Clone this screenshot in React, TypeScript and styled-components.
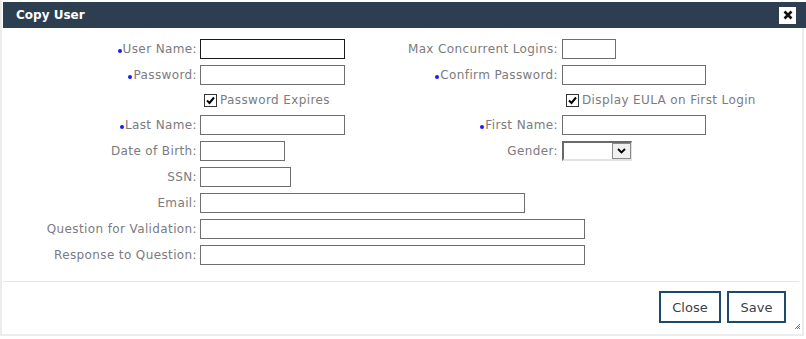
import React from "react";
import styled, { createGlobalStyle } from "styled-components";

const GlobalStyle = createGlobalStyle`
  body {
    margin: 0;
    background: #fff;
    font-family: "DejaVu Sans", Verdana, sans-serif;
  }
`;

const Dialog = styled.div`
  position: relative;
  width: 803px;
  height: 336px;
  border-left: 2px solid #ececec;
  border-bottom: 2px solid #ececec;
  padding: 2px 0 0 1px;
  box-sizing: border-box;
`;

const TitleBar = styled.div`
  height: 26px;
  margin-right: -3px;
  background: #2d3e50;
  display: flex;
  align-items: center;
  justify-content: space-between;
  padding: 0 10px 0 13px;
`;

const Title = styled.span`
  color: #fff;
  font-weight: bold;
  font-size: 12px;
`;

const CloseX = styled.button`
  width: 17px;
  height: 17px;
  padding: 0;
  border: none;
  background: #fff;
  display: flex;
  align-items: center;
  justify-content: center;
`;

const Content = styled.div`
  border-right: 2px solid #ececec;
  margin-right: -1px;
  height: 308px;
  box-sizing: border-box;
`;

const Form = styled.div`
  display: grid;
  grid-template-columns: 197px 162px 200px 1fr;
  row-gap: 6px;
  padding: 11px 0 16px;
  border-bottom: 1px solid #e6e6e6;
  margin-right: 3px;
`;

const Label = styled.label<{ $pad?: number }>`
  display: flex;
  align-items: center;
  justify-content: flex-end;
  padding-right: ${(p) => p.$pad ?? 3}px;
  height: 20px;
  font-size: 12px;
  letter-spacing: 0.38px;
  color: #7b7b80;
  white-space: nowrap;
`;

const Dot = styled.span`
  width: 4px;
  height: 4px;
  border-radius: 50%;
  background: #1a1aff;
  margin: 4px 1px 0 0;
`;

const Input = styled.input<{ $w: number; $focus?: boolean; $span?: boolean }>`
  width: ${(p) => p.$w}px;
  height: 20px;
  box-sizing: border-box;
  border: 1px solid ${(p) => (p.$focus ? "#1a1a1a" : "#6e6e6e")};
  padding: 0 3px;
  margin: 0;
  font: inherit;
  font-size: 12px;
  outline: none;
  grid-column: ${(p) => (p.$span ? "2 / 5" : "auto")};
`;

const Empty = styled.div``;

const CheckRow = styled.label<{ $col: string }>`
  display: flex;
  align-items: center;
  gap: 3px;
  height: 18px;
  padding-left: 4px;
  font-size: 12px;
  letter-spacing: 0.38px;
  color: #7b7b80;
  white-space: nowrap;
  grid-column: ${(p) => p.$col};
`;

const Box = styled.span`
  width: 11px;
  height: 11px;
  border: 1px solid #333;
  background: #fff;
  display: flex;
  align-items: center;
  justify-content: center;
`;

const Select = styled.div`
  width: 70px;
  height: 20px;
  box-sizing: border-box;
  border-top: 2px solid #6a6a6a;
  border-left: 2px solid #6a6a6a;
  border-right: 1px solid #e2e2e2;
  border-bottom: 2px solid #e2e2e2;
  background: #fff;
  display: flex;
  justify-content: flex-end;
`;

const Arrow = styled.span`
  width: 19px;
  height: 16px;
  box-sizing: border-box;
  border: 1px solid #8a8a8a;
  background: #f0f0f0;
  display: flex;
  align-items: center;
  justify-content: center;
`;

const Footer = styled.div`
  display: flex;
  justify-content: flex-end;
  gap: 6px;
  padding: 9px 16px 0 0;
`;

const Button = styled.button<{ $w: number }>`
  width: ${(p) => p.$w}px;
  height: 32px;
  border: 2px solid #1d4a6b;
  background: #fff;
  color: #3a3f4a;
  font-family: "DejaVu Sans", Verdana, sans-serif;
  font-size: 13px;
  padding: 0;
`;

const Grip = styled.svg`
  position: absolute;
  right: 2px;
  bottom: 4px;
`;

const Check = () => (
  <Box>
    <svg width="9" height="9" viewBox="0 0 9 9">
      <path d="M1 4.5 L3.5 7 L8 1.5" stroke="#000" strokeWidth="2" fill="none" />
    </svg>
  </Box>
);

const Req = ({ children }: { children: React.ReactNode }) => (
  <>
    <Dot />
    {children}
  </>
);

export default function App() {
  return (
    <>
      <GlobalStyle />
      <Dialog>
        <TitleBar>
          <Title>Copy User</Title>
          <CloseX>
            <svg width="10" height="10" viewBox="0 0 10 10">
              <path d="M1.5 1.5 L8.5 8.5 M8.5 1.5 L1.5 8.5" stroke="#111" strokeWidth="2.6" />
            </svg>
          </CloseX>
        </TitleBar>
        <Content>
          <Form>
            <Label><Req>User Name:</Req></Label>
            <Input $w={145} $focus />
            <Label $pad={4}>Max Concurrent Logins:</Label>
            <Input $w={54} />

            <Label><Req>Password:</Req></Label>
            <Input $w={145} type="text" />
            <Label $pad={4}><Req>Confirm Password:</Req></Label>
            <Input $w={144} type="text" />

            <Empty />
            <CheckRow $col="2 / 3"><Check />Password Expires</CheckRow>
            <CheckRow $col="4 / 5"><Check />Display EULA on First Login</CheckRow>

            <Label><Req>Last Name:</Req></Label>
            <Input $w={145} />
            <Label $pad={4}><Req>First Name:</Req></Label>
            <Input $w={144} />

            <Label>Date of Birth:</Label>
            <Input $w={85} />
            <Label $pad={4}>Gender:</Label>
            <Select>
              <Arrow>
                <svg width="9" height="6" viewBox="0 0 9 6">
                  <path d="M1 1 L4.5 4.5 L8 1" stroke="#000" strokeWidth="1.8" fill="none" />
                </svg>
              </Arrow>
            </Select>

            <Label>SSN:</Label>
            <Input $w={91} />
            <Empty />
            <Empty />

            <Label>Email:</Label>
            <Input $w={325} $span />

            <Label>Question for Validation:</Label>
            <Input $w={385} $span />

            <Label>Response to Question:</Label>
            <Input $w={385} $span />
          </Form>
          <Footer>
            <Button $w={62}>Close</Button>
            <Button $w={59}>Save</Button>
          </Footer>
        </Content>
        <Grip width="7" height="7" viewBox="0 0 7 7">
          <path d="M6 1 L1 6 M6 3 L3 6 M6 5 L5 6" stroke="#777" strokeWidth="1" />
        </Grip>
      </Dialog>
    </>
  );
}
